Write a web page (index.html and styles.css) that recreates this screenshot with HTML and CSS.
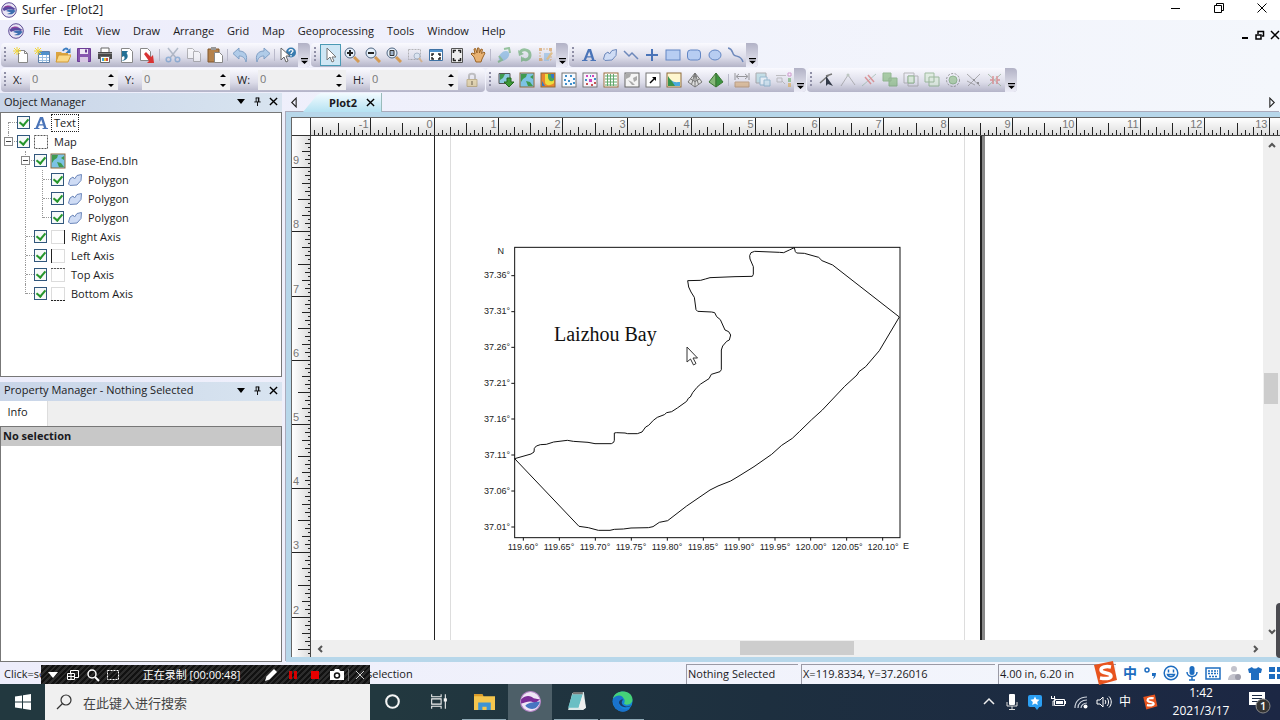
FILE: index.html
```html
<!DOCTYPE html>
<html lang="en">
<head>
  <meta charset="UTF-8">
  <meta name="viewport" content="width=device-width, initial-scale=1.0">
  <title>Surfer - [Plot2]</title>
  <link rel="stylesheet" href="styles.css">
</head>
<body>
  <!-- Shared symbols -->
  <svg class="defs" aria-hidden="true">
    <symbol id="logo" viewBox="0 0 16 16">
      <circle cx="8" cy="8" r="7.3" fill="#e9e4f4" stroke="#5b4a94"/>
      <path d="M1.5 7C4 3 10 3 14.5 7l-2 1C9 6.500 6 8 3 9z" fill="#5a4aa0"/>
      <path d="M5 9c3-2 6-2 9.500-.5C13 12 10 13 6 12l4-1.500z" fill="#3d6fb0"/>
      <path d="M2.500 5.500C5 3 9 3 11 4.500z" fill="#8e3f9c"/>
    </symbol>
    <symbol id="poly" viewBox="0 0 16 16">
      <path d="M1.500 12L3 7l3-2 1.500 2L10 3.500l4.500-1-.5 6-4 4.500-7 .5z" fill="#cfdcf5" stroke="#6d88bb"/>
    </symbol>
    <symbol id="letter-a" viewBox="0 0 16 16">
      <path d="M7 2h3l3.500 11H15v1H9.500v-1H11l-.8-2.500H6L5 13h1.500v1H1v-1h1.500zM6.400 9.300h3.400L8.200 4.500z" fill="#4a74b8" fill-rule="evenodd"/>
    </symbol>
    <symbol id="basemap" viewBox="0 0 16 16">
      <rect x="1" y="1" width="14" height="14" fill="#7cc3e4" stroke="#8d6a3a"/>
      <path d="M2 2h6l-1 3-3 2-2 3zM14 3v4l-3-2zM7 9l4 1 3 4H9z" fill="#3f9a4f"/>
    </symbol>
    <symbol id="frame" viewBox="0 0 16 16">
      <rect x="1.500" y="1.500" width="13" height="13" fill="#fff" stroke="#b9b9b9" stroke-dasharray="1 1"/>
    </symbol>
    <symbol id="pin" viewBox="0 0 10 10">
      <path d="M3 1h4M3.500 1v4.500M6.500 1v4.500M6 1v4.500M1.500 5.500h7M5 5.500V10" fill="none" stroke="#000"/>
    </symbol>
    <symbol id="cross" viewBox="0 0 10 10">
      <path d="M1 1l8 8M9 1L1 9" fill="none" stroke="#000" stroke-width="1.500"/>
    </symbol>
    <symbol id="sogou" viewBox="0 0 26 26">
      <path d="M2 5L21 1l4 19-18 5z" fill="#e8541e"/>
      <path d="M19 7c-5-1-10 0-10 3 0 4 10 2 10 6 0 3-6 3-11 2" fill="none" stroke="#fff" stroke-width="3.500"/>
    </symbol>
  </svg>

  <div class="window">
    <header class="titlebar">
      <svg class="icon"><use href="#logo"/></svg>
      <h1>Surfer - [Plot2]</h1>
      <div class="caption-buttons">
        <button aria-label="Minimize"><svg viewBox="0 0 12 12"><path d="M1 6.500h9" stroke="#000"/></svg></button>
        <button aria-label="Restore"><svg viewBox="0 0 12 12"><path d="M1.500 3.500h7v7h-7zM3.500 3.500v-2h7v7h-2" fill="none" stroke="#000"/></svg></button>
        <button aria-label="Close"><svg viewBox="0 0 12 12"><path d="M1.500 1.500l9 9M10.500 1.500l-9 9" stroke="#000"/></svg></button>
      </div>
    </header>

    <nav class="menubar">
      <svg class="icon"><use href="#logo"/></svg>
      <button>File</button><button>Edit</button><button>View</button><button>Draw</button><button>Arrange</button><button>Grid</button><button>Map</button><button>Geoprocessing</button><button>Tools</button><button>Window</button><button>Help</button>
      <div class="mdi-buttons">
        <button aria-label="Minimize plot"><svg viewBox="0 0 10 10"><path d="M2 8h6" stroke="#000" stroke-width="2"/></svg></button>
        <button aria-label="Restore plot"><svg viewBox="0 0 10 10"><path d="M1 5h5v4H1zM3 4V1.500h5.500V6H7" fill="none" stroke="#000" stroke-width="1.500"/></svg></button>
        <button aria-label="Close plot"><svg viewBox="0 0 10 10"><use href="#cross"/></svg></button>
      </div>
    </nav>

    <!-- Standard, view and draw toolbars -->
    <div class="toolbar-row">
      <div class="toolbar">
        <i class="grip"></i>
        <button class="tool" aria-label="New plot"><svg viewBox="0 0 16 16"><path d="M5.500 3.500h6l3 3v9h-9z" fill="#fff" stroke="#888"/><path d="M11.500 3.500v3h3" fill="none" stroke="#888"/><path d="M4 0v8M0 4h8M1 1l6 6M7 1L1 7" stroke="#f2d63a"/></svg></button>
        <button class="tool" aria-label="New worksheet"><svg viewBox="0 0 16 16"><path d="M4.500 4.500h11v11h-11z" fill="#fff" stroke="#5d7fa8"/><path d="M5 5h10v3H5z" fill="#4f91cc"/><path d="M5 10.500h10M5 13.500h10M8.500 8v7M12.500 8v7" stroke="#9cc0e2"/><path d="M4 0v8M0 4h8M1 1l6 6M7 1L1 7" stroke="#f2d63a"/></svg></button>
        <button class="tool" aria-label="Open"><svg viewBox="0 0 16 16"><path d="M1 5h5l1 1h6v9H1z" fill="#dca43f"/><path d="M3.500 8H16l-3 7H1z" fill="#fad987" stroke="#d39b36"/><path d="M8 4c1-3 4-3 5-1" fill="none" stroke="#3a7cc0" stroke-width="2"/><path d="M15.500 1v5h-5z" fill="#3a7cc0"/></svg></button>
        <button class="tool" aria-label="Save"><svg viewBox="0 0 16 16"><path d="M1.500 1.500h13v13h-13z" fill="#8755ae" stroke="#6c3c96"/><path d="M4 2h8v5H4z" fill="#efe8f5"/><path d="M4 10h8v5H4z" fill="#d7c8e4"/><path d="M9 2.500h2v3H9z" fill="#6c3c96"/></svg></button>
        <button class="tool" aria-label="Print"><svg viewBox="0 0 16 16"><path d="M4 1h8v5H4z" fill="#fff" stroke="#666"/><path d="M1 5h14v7H1z" fill="#4a4a4a"/><path d="M1 6h14v1H1z" fill="#888"/><path d="M3.500 9.500h9v6h-9z" fill="#fff" stroke="#666"/><path d="M5 11h2v3H5z" fill="#3ca4d8"/><path d="M7 11h2v3H7z" fill="#ecc52f"/><path d="M9 11h2v3H9z" fill="#cc4c4c"/></svg></button>
        <button class="tool" aria-label="Import"><svg viewBox="0 0 16 16"><path d="M3.500 1.500h8l3 3v11h-11z" fill="#fff" stroke="#888"/><path d="M3 14c4-1 4-3 3-5L4 10V4h6L8.500 6c3 4 0 8-5.500 8z" fill="#236f94"/></svg></button>
        <button class="tool" aria-label="Export"><svg viewBox="0 0 16 16"><path d="M1.500 1.500h7l3 3v9h-10z" fill="#fff" stroke="#888"/><path d="M5 7l2-2 5 5 2-2 1 8H8l2-2z" fill="#d93434"/></svg></button>
        <i class="sep"></i>
        <button class="tool dim" aria-label="Cut"><svg viewBox="0 0 16 16"><path d="M3 1l8 10M13 1L5 11" stroke="#8593a5" stroke-width="1.500"/><circle cx="3.500" cy="12.500" r="2.300" fill="none" stroke="#5a8fc8" stroke-width="1.500"/><circle cx="12.500" cy="12.500" r="2.300" fill="none" stroke="#5a8fc8" stroke-width="1.500"/></svg></button>
        <button class="tool dim" aria-label="Copy"><svg viewBox="0 0 16 16"><path d="M1.500 1.500h5l2 2v8h-7z" fill="#fff" stroke="#888"/><path d="M7.500 4.500h5l2 2v8h-7z" fill="#fff" stroke="#888"/></svg></button>
        <button class="tool" aria-label="Paste"><svg viewBox="0 0 16 16"><path d="M1 2h11v13H1z" fill="#b5824c" stroke="#80572d"/><path d="M4 0h5v3H4z" fill="#999"/><path d="M7.500 5.500h5l3 3v7h-8z" fill="#fff" stroke="#888"/></svg></button>
        <i class="sep"></i>
        <button class="tool" aria-label="Undo"><svg viewBox="0 0 16 16"><path d="M6 1v3c6 0 9 4 7 11-1-4-3-6-7-6v3L0 6.500z" fill="#b0cbe8" stroke="#7f9fc5"/></svg></button>
        <button class="tool" aria-label="Redo"><svg viewBox="0 0 16 16"><path d="M10 1v3C4 4 1 8 3 15c1-4 3-6 7-6v3l6-5.500z" fill="#b0cbe8" stroke="#7f9fc5"/></svg></button>
        <i class="sep"></i>
        <button class="tool" aria-label="Context help"><svg viewBox="0 0 16 16"><circle cx="11" cy="5.500" r="5" fill="#377bae"/><path d="M9 4.500c0-3 4-2 4-.5 0 1-2 1-2 3M11 8v1.500" fill="none" stroke="#fff" stroke-width="1.200"/><path d="M1 1v12l3-3 2 5 2-1-2-5h4z" fill="#fff" stroke="#666"/></svg></button>
        <button class="more" aria-label="More standard tools"></button>
      </div>
      <div class="toolbar">
        <i class="grip"></i>
        <button class="tool active" aria-label="Select"><svg viewBox="0 0 16 16"><path d="M4 1v12l3-3 2 5 2-1-2-4h4z" fill="#fff" stroke="#777"/></svg></button>
        <button class="tool" aria-label="Zoom in"><svg viewBox="0 0 16 16"><path d="M10 10l5 5" stroke="#d39a54" stroke-width="3"/><circle cx="6" cy="6" r="5" fill="#e6f0fa" stroke="#4f6580"/><path d="M3 6h6M6 3v6" stroke="#222" stroke-width="2"/></svg></button>
        <button class="tool" aria-label="Zoom out"><svg viewBox="0 0 16 16"><path d="M10 10l5 5" stroke="#d39a54" stroke-width="3"/><circle cx="6" cy="6" r="5" fill="#e6f0fa" stroke="#4f6580"/><path d="M3 6h6" stroke="#222" stroke-width="2"/></svg></button>
        <button class="tool" aria-label="Zoom page"><svg viewBox="0 0 16 16"><path d="M10 10l5 5" stroke="#d39a54" stroke-width="3"/><circle cx="6" cy="6" r="5" fill="#e6f0fa" stroke="#4f6580"/><path d="M4 3.500h4v5H4z" fill="#9fb4cc" stroke="#333"/></svg></button>
        <button class="tool dim" aria-label="Zoom rectangle"><svg viewBox="0 0 16 16"><path d="M1.500 2.500h12v10h-12z" fill="none" stroke="#888" stroke-dasharray="2 1"/><circle cx="10" cy="9" r="3" fill="#d5e6f5" stroke="#7c93ac"/><path d="M12 11l3 4" stroke="#d39a54" stroke-width="2"/></svg></button>
        <button class="tool" aria-label="Fit to window"><svg viewBox="0 0 16 16"><path d="M1.500 2.500h13v11h-13z" fill="#fff" stroke="#3f72a4"/><path d="M2 3h12v2H2z" fill="#5294cf"/><path d="M4 9V7h2M10 7h2v2M12 10v2h-2M6 12H4v-2" fill="none" stroke="#222" stroke-width="1.500"/></svg></button>
        <button class="tool" aria-label="Full screen"><svg viewBox="0 0 16 16"><path d="M2.500 1.500h11v14h-11z" fill="#eee" stroke="#555"/><path d="M4.500 6V3.500H7M9 3.500h2.500V6M11.500 11v2.500H9M7 13.500H4.500V11" fill="none" stroke="#222" stroke-width="1.500"/></svg></button>
        <button class="tool" aria-label="Pan"><svg viewBox="0 0 16 16"><path d="M4 10L1 7l1-1 3 1-1-5 1.500-.5L7 6l.5-5H9l.5 5L11 2l1.500.5-1 4L14 5l1 1-3 6-1 3H6z" fill="#e8b273" stroke="#9b6426"/></svg></button>
        <i class="sep"></i>
        <button class="tool dim" aria-label="Track"><svg viewBox="0 0 16 16"><ellipse cx="8" cy="9" rx="6" ry="4" fill="#68a9dc" transform="rotate(-40 8 9)"/><path d="M8 2l5-1 1 5M3 9l3 4-4 2" fill="none" stroke="#4f9f58" stroke-width="2"/></svg></button>
        <button class="tool dim" aria-label="Rotate"><svg viewBox="0 0 16 16"><path d="M3 6c1-5 10-4 10 2 0 5-6 6-8 3" fill="none" stroke="#4f9f58" stroke-width="3"/><path d="M1 3l1 6 5-2zM4 9v6l4-2z" fill="#4f9f58"/></svg></button>
        <button class="tool dim" aria-label="Reshape"><svg viewBox="0 0 16 16"><path d="M2 2h11v11H2z" fill="none" stroke="#d08a35" stroke-dasharray="2 1"/><path d="M1 1h3v3H1zM11 1h3v3h-3zM1 11h3v3H1z" fill="#d08a35"/><path d="M6 6h7l-2 8H6z" fill="#83b6e2"/><path d="M8 12l5-7 2 1-5 7z" fill="#dca43f"/></svg></button>
        <button class="more" aria-label="More view tools"></button>
      </div>
      <div class="toolbar">
        <i class="grip"></i>
        <button class="tool" aria-label="Text"><svg><use href="#letter-a"/></svg></button>
        <button class="tool" aria-label="Polygon"><svg><use href="#poly"/></svg></button>
        <button class="tool" aria-label="Polyline"><svg viewBox="0 0 16 16"><path d="M1 4l5 5 3-3 6 6" fill="none" stroke="#6d88bb" stroke-width="1.500"/></svg></button>
        <button class="tool" aria-label="Symbol"><svg viewBox="0 0 16 16"><path d="M8 2v12M2 8h12" stroke="#4a74b8" stroke-width="2"/></svg></button>
        <button class="tool" aria-label="Rectangle"><svg viewBox="0 0 16 16"><rect x="1" y="3" width="14" height="10" fill="#b7cdf2" stroke="#6286c4"/></svg></button>
        <button class="tool" aria-label="Rounded rectangle"><svg viewBox="0 0 16 16"><rect x="1.500" y="3" width="13" height="10" rx="3" fill="#b7cdf2" stroke="#6286c4"/></svg></button>
        <button class="tool" aria-label="Ellipse"><svg viewBox="0 0 16 16"><ellipse cx="8" cy="8" rx="6" ry="5" fill="#b7cdf2" stroke="#6286c4"/></svg></button>
        <button class="tool" aria-label="Spline"><svg viewBox="0 0 16 16"><path d="M0 1c5 1 4 5 6 7s7 0 9 7" fill="none" stroke="#6d88bb" stroke-width="1.500"/></svg></button>
        <button class="more" aria-label="More draw tools"></button>
      </div>
    </div>

    <!-- Position, map and geometry toolbars -->
    <div class="toolbar-row">
      <div class="toolbar">
        <i class="grip"></i>
        <label class="position"><span>X:</span><input type="number" placeholder="0"></label>
        <label class="position"><span>Y:</span><input type="number" placeholder="0"></label>
        <label class="position"><span>W:</span><input type="number" placeholder="0"></label>
        <label class="position"><span>H:</span><input type="number" placeholder="0"></label>
        <button class="tool dim" aria-label="Lock ratio"><svg viewBox="0 0 16 16"><path d="M5 8V4c0-3 6-3 6 0v4" fill="none" stroke="#999" stroke-width="2"/><path d="M3 7.500h10v7H3z" fill="#e3cb84" stroke="#a58b46"/><path d="M8 9v4" stroke="#7b652c" stroke-width="2"/></svg></button>
      </div>
      <div class="toolbar">
        <i class="grip"></i>
        <button class="tool" aria-label="New map"><svg viewBox="0 0 16 16"><path d="M1 1.500h11v10H1z" fill="#8ccbe0" stroke="#555"/><path d="M2 2h5l-2 4-3 2z" fill="#3f9a4f"/><path d="M9 6h4v4h3l-5 5-5-5h3z" fill="#3c9836" stroke="#24691f"/></svg></button>
        <button class="tool" aria-label="Base map"><svg><use href="#basemap"/></svg></button>
        <button class="tool" aria-label="Contour map"><svg viewBox="0 0 16 16"><rect x="1" y="1" width="14" height="14" fill="#e9862f" stroke="#8d6a3a"/><path d="M5 2h9v9c-3 3-9 3-9-1z" fill="#eddd3c"/><path d="M8 2h6v6c-3 3-6 0-6-3z" fill="#48a554"/><path d="M11 2h3v4c-3 1-3-2-3-4zM2 9l3 5H2z" fill="#3478c6"/></svg></button>
        <button class="tool" aria-label="Post map"><svg viewBox="0 0 16 16"><rect x="1" y="1" width="14" height="14" fill="#f6faff" stroke="#777"/><path d="M4 3h2v2H4zM9 3h2v2H9zM12 6h2v2h-2zM3 7h2v2H3zM7 8h2v2H7zM4 11h2v2H4zM9 11h2v2H9zM12 10h2v2h-2z" fill="#3f8fca"/></svg></button>
        <button class="tool" aria-label="Classed post map"><svg viewBox="0 0 16 16"><rect x="1" y="1" width="14" height="14" fill="#f8f4fb" stroke="#777"/><path d="M4 3h2v2H4zM10 3h2v2h-2zM7 7h3v3H7z" fill="#d246bd"/><path d="M12 6h2v2h-2zM3 7h2v2H3zM8 3h1v2H8z" fill="#3f8fca"/><path d="M4 11h2v2H4zM9 12h2v2H9zM12 10h2v2h-2z" fill="#c65555"/></svg></button>
        <button class="tool" aria-label="Grid values"><svg viewBox="0 0 16 16"><rect x="1" y="1" width="14" height="14" fill="#fff" stroke="#9b7140"/><path d="M2 4h12M2 7h12M2 10h12M2 13h12M4.500 2v12M7.500 2v12M10.500 2v12" stroke="#63a86c"/></svg></button>
        <button class="tool" aria-label="Image map"><svg viewBox="0 0 16 16"><rect x="1" y="1" width="14" height="14" fill="#f4f4f4" stroke="#666"/><path d="M2 2h5l-1 3-4 2zM9 6l4-2v4l-3 2zM4 8l4 2 3 3H8z" fill="#aaa"/></svg></button>
        <button class="tool" aria-label="Vector map"><svg viewBox="0 0 16 16"><rect x="1" y="1" width="14" height="14" fill="#fff" stroke="#777"/><path d="M5 11l5-5" stroke="#000" stroke-width="1.500"/><path d="M7 5h4v4z"/></svg></button>
        <button class="tool" aria-label="Color relief"><svg viewBox="0 0 16 16"><rect x="1" y="1" width="14" height="14" fill="#fff6cf" stroke="#8d6a3a"/><path d="M2 4c5 8 8 7 12 7v3H2z" fill="#39934b"/><path d="M5 8c3 3 6 2 9 2v4H9z" fill="#4aa9dc"/></svg></button>
        <button class="tool" aria-label="3D wireframe"><svg viewBox="0 0 16 16"><path d="M8 1L1 10l7 5 7-5zM8 1v14M8 1L4.500 12.500M8 1l3.500 11.500M6 4l2 1 2-1M3.500 7L8 9.500 12.500 7" fill="#ddd" stroke="#777"/></svg></button>
        <button class="tool" aria-label="3D surface"><svg viewBox="0 0 16 16"><path d="M8 1L1 10l7 5z" fill="#86b878" stroke="#3c7734"/><path d="M8 1l7 9-7 5z" fill="#3c9340" stroke="#3c7734"/></svg></button>
        <i class="sep"></i>
        <button class="tool dim" aria-label="Scale bar"><svg viewBox="0 0 16 16"><path d="M1 1v7M15 1v7M3 4.500h10M5 2L2 4.500 5 7M11 2l3 2.500L11 7" fill="none" stroke="#555"/><path d="M1 10h14v5H1z" fill="#d9a667" stroke="#a2713b"/></svg></button>
        <button class="tool dim" aria-label="Overlay"><svg viewBox="0 0 16 16"><path d="M1 1h10v10H1z" fill="#a4d4dc" stroke="#777"/><path d="M5 5h7v8H5z" fill="#e9f5fb" stroke="#5897b8"/><path d="M9 8h6v6H9z" fill="#bfe1ef" stroke="#5897b8"/></svg></button>
        <button class="tool dim" aria-label="Stack maps"><svg viewBox="0 0 16 16"><path d="M0 3.500h10M1 6h5v4H1zM6 9l3 3" fill="none" stroke="#999"/><path d="M12 1h3v3h-3z" fill="#fff" stroke="#b955b0"/><path d="M12 6h3v4h-3z" fill="#5ba55b"/><path d="M12 11h3v4h-3z" fill="#dca43f"/></svg></button>
        <button class="more" aria-label="More map tools"></button>
      </div>
      <div class="toolbar">
        <i class="grip"></i>
        <button class="tool" aria-label="Reshape"><svg viewBox="0 0 16 16"><path d="M1 11l9-8M7 4l6-2" stroke="#777" stroke-width="1.500"/><path d="M7 4v10l2-2 5 2z" fill="#333a48"/></svg></button>
        <button class="tool dim" aria-label="Add vertex"><svg viewBox="0 0 16 16"><path d="M1 14L8 3l7 10" fill="none" stroke="#888"/><circle cx="8" cy="3" r="1.500" fill="#9a9"/></svg></button>
        <button class="tool dim" aria-label="Break line"><svg viewBox="0 0 16 16"><path d="M1 14L15 2" stroke="#8a9"/><path d="M4 5l6 7M7 3l6 7" stroke="#d25353" stroke-width="1.500"/></svg></button>
        <button class="tool dim" aria-label="Union"><svg viewBox="0 0 16 16"><path d="M1 1h8v8H1zM7 6h8v8H7z" fill="#72b167" stroke="#4e8f47"/></svg></button>
        <button class="tool dim" aria-label="Intersect"><svg viewBox="0 0 16 16"><path d="M1 1h10v10H1zM5 4h10v10H5z" fill="none" stroke="#888"/><path d="M5 4h6v7H5z" fill="#cfe8ca" stroke="#4e8f47"/></svg></button>
        <button class="tool dim" aria-label="Difference"><svg viewBox="0 0 16 16"><path d="M1 1h9v9H1zM5 5h10v9H5z" fill="#d8edd5" stroke="#62955c"/></svg></button>
        <button class="tool dim" aria-label="Buffer"><svg viewBox="0 0 16 16"><circle cx="8" cy="8" r="6.500" fill="none" stroke="#555" stroke-dasharray="2 1.500"/><circle cx="8" cy="8" r="4" fill="#82b878" stroke="#4e8f47"/></svg></button>
        <button class="tool dim" aria-label="Split lines"><svg viewBox="0 0 16 16"><path d="M1 2l13 12M14 2L2 14M1 9l8 4" stroke="#777"/><path d="M7 7h2v2H7zM11 10h2v2h-2z" fill="#555"/></svg></button>
        <button class="tool dim" aria-label="Trim"><svg viewBox="0 0 16 16"><path d="M1 2l13 12M14 2L1 14" stroke="#7a9a78"/><path d="M6 4v8M10 4v8M3 8h3M10 8h3" stroke="#d25353" stroke-width="1.500"/></svg></button>
        <button class="more" aria-label="More geometry tools"></button>
      </div>
    </div>

    <main class="workspace">
      <aside class="dock">
        <section class="panel object-manager">
          <header class="panel-title">
            <h2>Object Manager</h2>
            <button aria-label="Panel menu"><i class="caret"></i></button>
            <button aria-label="Auto hide"><svg><use href="#pin"/></svg></button>
            <button aria-label="Close panel"><svg><use href="#cross"/></svg></button>
          </header>
          <div class="panel-body">
            <ul class="tree">
              <li><label><input type="checkbox" checked><svg><use href="#letter-a"/></svg><span class="focused">Text</span></label></li>
              <li>
                <button class="expander" aria-label="Collapse Map"></button>
                <label><input type="checkbox" checked><svg viewBox="0 0 16 16"><rect x="1.500" y="1.500" width="13" height="13" fill="#fff" stroke="#555" stroke-dasharray="2 1"/></svg><span>Map</span></label>
                <ul>
                  <li>
                    <button class="expander" aria-label="Collapse Base-End.bln"></button>
                    <label><input type="checkbox" checked><svg><use href="#basemap"/></svg><span>Base-End.bln</span></label>
                    <ul>
                      <li><label><input type="checkbox" checked><svg><use href="#poly"/></svg><span>Polygon</span></label></li>
                      <li><label><input type="checkbox" checked><svg><use href="#poly"/></svg><span>Polygon</span></label></li>
                      <li><label><input type="checkbox" checked><svg><use href="#poly"/></svg><span>Polygon</span></label></li>
                    </ul>
                  </li>
                  <li><label><input type="checkbox" checked><svg viewBox="0 0 16 16"><use href="#frame"/><path d="M14.500 1v14" stroke="#222"/></svg><span>Right Axis</span></label></li>
                  <li><label><input type="checkbox" checked><svg viewBox="0 0 16 16"><use href="#frame"/><path d="M1.500 1v14" stroke="#222"/></svg><span>Left Axis</span></label></li>
                  <li><label><input type="checkbox" checked><svg viewBox="0 0 16 16"><use href="#frame"/><path d="M1 1.500h14" stroke="#555" stroke-dasharray="2 1"/></svg><span>Top Axis</span></label></li>
                  <li><label><input type="checkbox" checked><svg viewBox="0 0 16 16"><use href="#frame"/><path d="M1 14.500h14" stroke="#222" stroke-dasharray="2 1"/></svg><span>Bottom Axis</span></label></li>
                </ul>
              </li>
            </ul>
          </div>
        </section>
        <section class="panel property-manager">
          <header class="panel-title">
            <h2>Property Manager - Nothing Selected</h2>
            <button aria-label="Panel menu"><i class="caret"></i></button>
            <button aria-label="Auto hide"><svg><use href="#pin"/></svg></button>
            <button aria-label="Close panel"><svg><use href="#cross"/></svg></button>
          </header>
          <div class="panel-tabs"><button>Info</button></div>
          <div class="panel-body">
            <h3>No selection</h3>
          </div>
        </section>
      </aside>

      <section class="document">
        <div class="doc-tabs">
          <button class="tab-scroll" aria-label="Scroll tabs left"><svg viewBox="0 0 10 10"><path d="M6.500 1v8l-4-4z" fill="none" stroke="#222"/></svg></button>
          <div class="doc-tab"><span>Plot2</span><button aria-label="Close tab"><svg><use href="#cross"/></svg></button></div>
          <button class="tab-scroll right" aria-label="Scroll tabs right"><svg viewBox="0 0 10 10"><path d="M3.500 1v8l4-4z" fill="none" stroke="#222"/></svg></button>
        </div>
        <div class="plot">
          <div class="ruler-corner"></div>
          <svg class="ruler ruler-x" id="ruler-x"></svg>
          <svg class="ruler ruler-y" id="ruler-y"></svg>
          <div class="canvas">
            <svg class="page">
              <path d="M123.500 0v2000" stroke="#222"/>
              <path d="M139.500 0v2000M653.500 0v2000" stroke="#ddd"/>
              <path d="M670 0v2000" stroke="#222" stroke-width="2"/>
              <path d="M672.500 0v2000" stroke="#888" stroke-width="3"/>
              <svg x="159" y="99" width="450" height="325" viewBox="0 0 1350 975">
                <g class="outline">
                  <rect x="134" y="37" width="1156" height="871"/>
                  <path d="M134 671L183 657 192 651 193 640 199 633 211 629 229 628 251 621 292 616 310 619 354 622 375 626 424 626 431 622 433 616 433 594 439 593 465 594 473 596 502 596 516 591 527 576 536 571 550 556 562 547 583 539 590 533 605 530 622 519 650 499 655 490 661 486 668 473 681 457 692 447 717 431 724 418 750 410 754 404 754 345 758 333 770 319 778 315 782 300 776 290 765 285 751 254 740 245 734 233 725 231 683 229 678 224 673 187 663 171 656 156 653 137 692 136 706 132 720 128 795 125 847 124 850 118 850 95 840 72 839 62 843 53 854 49 928 52 941 53 958 45 973 38 976 50 980 54 1003 55 1046 67 1056 77 1088 90 1288 246 1228 347 1187 395 1167 410 1161 420 1124 454 1057 525 1025 554 989 589 967 610 935 631 905 658 852 695 807 723 782 738 744 753 720 765 650 813 593 857 568 862 549 875 535 878 483 879 460 882 433 883 420 886 385 886 355 878 327 874z"/>
                  <path d="M124 122h10M124 230h10M124 337h10M124 445h10M124 552h10M124 660h10M124 768h10M124 876h10"/>
                  <path d="M160 908v9M268 908v9M376 908v9M484 908v9M592 908v9M700 908v9M807 908v9M915 908v9M1022 908v9M1130 908v9M1238 908v9"/>
                </g>
              </svg>
              <g class="axis axis-y">
                <text x="193" y="118">N</text>
                <text x="199" y="142">37.36°</text><text x="199" y="178">37.31°</text><text x="199" y="214">37.26°</text><text x="199" y="250">37.21°</text><text x="199" y="286">37.16°</text><text x="199" y="322">37.11°</text><text x="199" y="358">37.06°</text><text x="199" y="394">37.01°</text>
              </g>
              <g class="axis axis-x">
                <text x="212" y="414">119.60°</text><text x="248" y="414">119.65°</text><text x="284" y="414">119.70°</text><text x="320" y="414">119.75°</text><text x="356" y="414">119.80°</text><text x="392" y="414">119.85°</text><text x="428" y="414">119.90°</text><text x="464" y="414">119.95°</text><text x="500" y="414">120.00°</text><text x="536" y="414">120.05°</text><text x="572" y="414">120.10°</text><text x="595" y="413">E</text>
              </g>
              <text class="map-title" x="243" y="205">Laizhou Bay</text>
              <path d="M376 211v15l3.500-3 3 6 2.500-1.500-3-5.500h4.500z" fill="#fff" stroke="#333"/>
            </svg>
          </div>
          <div class="scrollbar vertical">
            <button aria-label="Scroll up"><svg viewBox="0 0 10 10"><path d="M2 7l3-3 3 3" fill="none" stroke="#555" stroke-width="2"/></svg></button>
            <div class="track"><i class="thumb"></i></div>
            <button aria-label="Scroll down"><svg viewBox="0 0 10 10"><path d="M2 3l3 3 3-3" fill="none" stroke="#555" stroke-width="2"/></svg></button>
          </div>
          <div class="scrollbar horizontal">
            <button aria-label="Scroll left"><svg viewBox="0 0 10 10"><path d="M7 2L4 5l3 3" fill="none" stroke="#555" stroke-width="2"/></svg></button>
            <div class="track"><i class="thumb"></i></div>
            <button aria-label="Scroll right"><svg viewBox="0 0 10 10"><path d="M3 2l3 3-3 3" fill="none" stroke="#555" stroke-width="2"/></svg></button>
          </div>
        </div>
      </section>
    </main>

    <footer class="statusbar">
      <div class="hint"><span>Click=se</span><span>selection</span></div>
      <div class="cell cell-object">Nothing Selected</div>
      <div class="cell cell-coords">X=119.8334, Y=37.26016</div>
      <div class="cell cell-page">4.00 in, 6.20 in</div>

      <!-- Screen recorder strip floating over the status bar -->
      <div class="recorder">
        <button aria-label="Recorder menu"><svg viewBox="0 0 14 14"><path d="M2 4h10l-5 6z" fill="#fff"/></svg></button>
        <button aria-label="Recorder window"><svg viewBox="0 0 14 14"><path d="M1.500 5.500h7v6h-7zM4.500 5V2.500h8v7H9M5 6v5M2 8.500h6" fill="none" stroke="#fff"/></svg></button>
        <button aria-label="Magnify"><svg viewBox="0 0 14 14"><circle cx="6" cy="6" r="4" fill="none" stroke="#fff" stroke-width="1.500"/><path d="M9 9l4 4" stroke="#fff" stroke-width="2"/></svg></button>
        <button aria-label="Select region"><svg viewBox="0 0 14 14"><path d="M1.500 2.500h11v9h-11z" fill="none" stroke="#fff" stroke-dasharray="2 1"/></svg></button>
        <span class="recorder-time">正在录制 [00:00:48]</span>
        <button aria-label="Annotate"><svg viewBox="0 0 14 14"><path d="M1 13l1.500-4.500L10 1l3 3-7.500 7.500z" fill="#fff"/></svg></button>
        <button aria-label="Pause"><svg viewBox="0 0 14 14"><path d="M3 3h3v8H3zM8 3h3v8H8z" fill="#d40000"/></svg></button>
        <button aria-label="Stop"><svg viewBox="0 0 14 14"><path d="M3 3h8v8H3z" fill="#e60000"/></svg></button>
        <button aria-label="Snapshot"><svg viewBox="0 0 14 14"><path d="M0 3h4l1-2h4l1 2h4v9H0z" fill="#fff"/><circle cx="7" cy="7.500" r="2.500" fill="#fff" stroke="#111" stroke-width="1.500"/></svg></button>
        <button class="recorder-close" aria-label="Close recorder"><svg viewBox="0 0 14 14"><path d="M3 3l8 8M11 3l-8 8" stroke="#ccc"/></svg></button>
      </div>

      <!-- Input method strip -->
      <div class="ime">
        <svg class="ime-logo"><use href="#sogou"/></svg>
        <span>中</span>
        <svg viewBox="0 0 16 16"><circle cx="5" cy="5" r="2" fill="none" stroke="#1e6dc0" stroke-width="1.500"/><path d="M10 8h4c0 3-1 5-3 6l1-3h-2z" fill="#1e6dc0"/></svg>
        <svg viewBox="0 0 16 16"><circle cx="8" cy="8" r="6.800" fill="none" stroke="#1e6dc0" stroke-width="1.500"/><path d="M5.500 4.500v3M10.500 4.500v3M4.500 9.500c1 3 6 3 7 0z" fill="none" stroke="#1e6dc0" stroke-width="1.500"/></svg>
        <svg viewBox="0 0 16 16"><rect x="5.500" y="1" width="5" height="9" rx="2.500" fill="#1e6dc0"/><path d="M3 7c0 6 10 6 10 0M8 11.500V15M5 15h6" fill="none" stroke="#1e6dc0" stroke-width="1.500"/></svg>
        <svg viewBox="0 0 16 16"><path d="M1 3h14v11H1z" fill="none" stroke="#1e6dc0" stroke-width="1.500"/><path d="M3 6h10M3 8.500h10M4 11.500h8" stroke="#1e6dc0" stroke-width="1.500" stroke-dasharray="2 1"/></svg>
        <svg viewBox="0 0 16 16"><circle cx="8" cy="4" r="3" fill="#c3c3cc"/><path d="M2 15c0-8 12-8 12 0z" fill="#c3c3cc"/><circle cx="12" cy="12" r="3" fill="#9d9daa"/></svg>
        <svg viewBox="0 0 16 16"><path d="M5 2c1 2 5 2 6 0l4 2-1 4h-2v7H4V8H2L1 4z" fill="#1e6dc0"/></svg>
        <svg viewBox="0 0 16 16"><path d="M1 2h6v5H1zM9 2h6v5H9zM1 9h6v5H1zM9 9h6v5H9z" fill="#1e6dc0"/></svg>
      </div>
    </footer>

    <div class="taskbar">
      <button class="start" aria-label="Start"><svg viewBox="0 0 16 16"><path d="M0 2.500l7-1v6.100H0zM8 1.300L16 0v7.600H8zM0 8.500h7v6.100l-7-1zM8 8.500h8V16l-8-1.200z" fill="#fff"/></svg></button>
      <label class="search">
        <svg viewBox="0 0 16 16"><circle cx="10" cy="6" r="5" fill="none" stroke="#333" stroke-width="1.200"/><path d="M6.500 9.500L1 15" stroke="#333" stroke-width="1.200"/></svg>
        <input type="text" placeholder="在此键入进行搜索" aria-label="Search">
      </label>
      <button class="task" aria-label="Cortana"><svg viewBox="0 0 20 20"><circle cx="10" cy="10" r="6" fill="none" stroke="#f4f4f4" stroke-width="2"/></svg></button>
      <button class="task" aria-label="Task view"><svg viewBox="0 0 20 20"><path d="M3.500 3v2.500h9V3M3.500 17v-2.500h9V17M3.500 7.500h9v5h-9zM16.500 3v14" fill="none" stroke="#f4f4f4"/><path d="M15 7h3v3h-3z" fill="#f4f4f4"/></svg></button>
      <button class="task open" aria-label="File Explorer"><svg viewBox="0 0 20 20"><path d="M0 3h8l1 2h11v13H0z" fill="#f5c64e"/><path d="M0 3h8l1 2H0z" fill="#dc9a26"/><path d="M4 11h12v7h-4v-3H8v3H4z" fill="#3e93d5"/></svg></button>
      <button class="task current" aria-label="Surfer"><svg viewBox="0 0 20 20"><circle cx="10" cy="10" r="9.500" fill="#eee4f5" stroke="#b583c8"/><path d="M1 8c5-5 10-3 12-1l6 1-5 4c-4-4-8-1-13 0z" fill="#7b2c98"/><path d="M5 14c4-4 9-3 14-4-2 8-9 9-14 4z" fill="#4775c1"/></svg></button>
      <button class="task open" aria-label="Notepad"><svg viewBox="0 0 20 20"><path d="M6 2l11-1 2 15-3 2H2z" fill="#d9e8e8"/><path d="M6 3h10l-4 13H2z" fill="#69bfc4"/><path d="M12 16l4-13 3 13-3 2z" fill="#eee"/><path d="M7 1h9v2H6z" fill="#777"/></svg></button>
      <button class="task open" aria-label="Edge"><svg viewBox="0 0 22 22"><circle cx="11" cy="11" r="10.500" fill="#1584d8"/><path d="M1 8C3-2 21-2 21.500 9c0 5-6 7-9 4 3-5-3-8-7-6z" fill="#45d179"/><path d="M1 8c4-5 11-4 11 1-4 0-7 5-2 9 3 2 7 1 9 0-5 7-19 4-18-10z" fill="#1a73cc"/><path d="M12 9c-3 2-2 6 2 7 3 1 6-1 6-1-1 2-9 4-12-1-2-3 1-6 4-5z" fill="#1b3b67"/></svg></button>

      <div class="tray">
        <svg viewBox="0 0 16 16"><path d="M3 10l5-5 5 5" fill="none" stroke="#eee" stroke-width="1.500"/></svg>
        <svg viewBox="0 0 16 16"><rect x="5" y="0" width="6" height="11" rx="1" fill="#fff"/><path d="M3 8v4h10V8M8 12v4M5 15.500h6" fill="none" stroke="#ddd"/></svg>
        <svg viewBox="0 0 16 16"><rect x="1" y="1" width="14" height="12" rx="2" fill="#2b9ff3"/><path d="M7 12h6l-3 4z" fill="#2b9ff3"/><path d="M8 2.500l1.300 2.800 3.200.4L10.200 8l.6 3L8 9.500 5.200 11l.6-3-2.300-2.300 3.200-.4z" fill="#fff"/></svg>
        <svg viewBox="0 0 16 16"><path d="M4.500 5.500h10v6h-10zM15.500 7v3M1.500 2v2M4.500 2v2M1 4.500h4V7H3v5" fill="none" stroke="#fff"/><path d="M6 7h7v3H6z" fill="#fff"/></svg>
        <svg viewBox="0 0 16 16"><path d="M2 14C2 7 7 3 14 3M5 14c0-5 4-8 9-8M8 14c0-3 3-5 6-5" fill="none" stroke="#ccd2dc" stroke-width="1.200"/><circle cx="12.500" cy="12.500" r="2" fill="#fff"/></svg>
        <svg viewBox="0 0 16 16"><path d="M1 6h3l3-3v10l-3-3H1zM9 6c1 1 1 3 0 4M11 4c2 2 2 6 0 8M13 2.500c3 3 3 8 0 11" fill="none" stroke="#fff"/></svg>
        <span>中</span>
        <svg><use href="#sogou"/></svg>
      </div>
      <div class="clock"><time>1:42</time><time>2021/3/17</time></div>
      <button class="notify" aria-label="Notifications"><svg viewBox="0 0 22 24"><path d="M0 2h16v13h-6l-3 4v-4H0z" fill="#fff"/><path d="M3 5.500h10M3 8.500h10M3 11.500h7" stroke="#1c2a44"/><circle cx="14" cy="16" r="7" fill="#333" stroke="#888"/></svg><b>1</b></button>
    </div>
    <div class="side-handle"></div>
  </div>

  <script src="script.js"></script>
</body>
</html>
```

FILE: styles.css
```css
* {
  box-sizing: border-box;
}

body {
  margin: 0;
  font: 11px/16px "Open Sans", "Noto Sans CJK SC", sans-serif;
  color: #1a1a22;
  overflow: hidden;
}

h1, h2, h3, ul {
  margin: 0;
  padding: 0;
  font-size: 11px;
  font-weight: 400;
}

button {
  display: flex;
  align-items: center;
  justify-content: center;
  margin: 0;
  padding: 0;
  border: 0;
  background: none;
  font: inherit;
  color: inherit;
}

svg {
  display: block;
  flex: none;
}

.defs {
  position: absolute;
  width: 0;
  height: 0;
}

.window {
  position: relative;
  display: flex;
  flex-direction: column;
  height: 100vh;
  background: linear-gradient(90deg, #ededfb, #f4f7fc);
}

.icon {
  width: 16px;
  height: 16px;
}

/* Title and menu */
.titlebar {
  display: flex;
  align-items: center;
  height: 20px;
  background: #fff;
}

.titlebar .icon {
  margin: 0 5px 0 1px;
}

.titlebar h1 {
  font-size: 12px;
}

.caption-buttons {
  display: flex;
  margin-left: auto;
}

.caption-buttons button {
  width: 43px;
  padding: 0 0 4px 7px;
}

.caption-buttons svg {
  width: 12px;
  height: 12px;
}

.menubar {
  display: flex;
  align-items: center;
  height: 22px;
  padding-left: 8px;
}

.menubar .icon {
  margin-right: 3px;
}

.menubar > button {
  padding: 0 7px 0 6px;
}

.mdi-buttons {
  display: flex;
  margin-left: auto;
  padding-top: 7px;
  gap: 5px;
}

.mdi-buttons svg {
  width: 10px;
  height: 10px;
}

/* Toolbars */
.toolbar-row {
  display: flex;
  gap: 1px;
  height: 24px;
  margin: 1px 0 0 1px;
}

.toolbar {
  position: relative;
  display: flex;
  align-items: center;
  border-radius: 4px;
  background: linear-gradient(#fafaff, #dcdce9 60%, #b4b4c8);
}

.grip {
  width: 2px;
  height: 16px;
  margin: 0 4px 0 3px;
  background: repeating-linear-gradient(#8f8fa6 0 2px, transparent 2px 4px);
}

.sep {
  width: 1px;
  height: 12px;
  margin: 0 2px;
  background: #b9b9ca;
}

.tool {
  width: 21px;
  height: 22px;
}

.tool svg {
  width: 16px;
  height: 16px;
}

.tool.active {
  background: #cfe7f5;
  border: 1px solid #4b9ab5;
}

.dim svg {
  opacity: 0.55;
}

.more {
  position: relative;
  width: 12px;
  height: 24px;
  border-radius: 0 4px 4px 0;
  background: linear-gradient(#b2b2c6, #dcdce8 70%, #ededf8);
}

.more::after {
  content: "";
  position: absolute;
  right: 2px;
  bottom: 3px;
  width: 7px;
  height: 6px;
  background: #000;
  clip-path: polygon(0 0, 100% 0, 100% 20%, 0 20%, 0 45%, 100% 45%, 50% 100%, 0 45%);
}

.position {
  position: relative;
  display: flex;
  align-items: center;
  padding-left: 3px;
}

.position + .position {
  padding-left: 7px;
}

.position span {
  width: 17px;
}

.position:nth-of-type(3) span {
  width: 21px;
}

.position input {
  width: 88px;
  height: 20px;
  padding: 0 2px 4px;
  border: 0;
  background: #efeff0;
  font: inherit;
}

.position input::placeholder {
  color: #777;
}

.position input::-webkit-inner-spin-button {
  display: none;
}

.position::before,
.position::after {
  content: "";
  position: absolute;
  right: 4px;
  border: 3px solid transparent;
}

.position::before {
  top: 1px;
  border-bottom: 3px solid #000;
}

.position::after {
  bottom: 0;
  border-top: 3px solid #000;
}

.position ~ .tool {
  margin: 0 3px;
}

/* Docked panels */
.workspace {
  display: flex;
  flex: 1;
  min-height: 0;
  gap: 4px;
  padding-top: 1px;
}

.dock {
  display: flex;
  flex-direction: column;
  flex: none;
  gap: 5px;
  width: 282px;
}

.panel {
  display: flex;
  flex-direction: column;
}

.object-manager {
  flex: 284;
}

.property-manager {
  flex: 281;
}

.panel-title {
  display: flex;
  align-items: center;
  height: 19px;
  padding: 0 1px 2px 4px;
  background: linear-gradient(90deg, #c9d5e8, #d8e4f0);
}

.panel-title h2 {
  flex: 1;
}

.panel-title button {
  width: 16px;
  height: 16px;
}

.panel-title svg,
.doc-tab svg {
  width: 9px;
  height: 9px;
}

.caret {
  border: 4px solid transparent;
  border-top: 5px solid #000;
  border-bottom: 0;
}

.panel-body {
  flex: 1;
  border: 1px solid #777;
  background: #fff;
}

.panel-tabs {
  display: flex;
  height: 25px;
  background: #efefef;
}

.panel-tabs button {
  width: 48px;
  padding: 0 12px 2px 0;
  border-right: 1px solid #ddd;
  background: #fff;
}

h3 {
  padding: 1px 2px 2px;
  background: #c8c8c8;
  font-weight: 700;
}

/* Object tree */
.tree,
.tree ul {
  list-style: none;
}

.tree ul {
  padding-left: 17px;
}

.tree li {
  position: relative;
}

.tree label {
  display: flex;
  align-items: center;
  height: 19px;
  padding-left: 16px;
}

.tree svg {
  width: 16px;
  height: 16px;
  margin: 0 3px;
}

.tree span {
  padding: 0 2px;
}

.tree .focused {
  outline: 1px dotted #222;
}

.tree input {
  appearance: none;
  position: relative;
  flex: none;
  width: 13px;
  height: 13px;
  margin: 0;
  border: 1px solid #31577c;
  background: #f6f9f9;
}

.tree input:checked::after {
  content: "";
  position: absolute;
  left: 3px;
  top: 0;
  width: 4px;
  height: 7px;
  border: solid #26962c;
  border-width: 0 2px 2px 0;
  transform: rotate(40deg);
}

.tree li::before {
  content: "";
  position: absolute;
  left: 7px;
  top: 0;
  height: 100%;
  border-left: 1px dotted #999;
}

.tree li:last-child::before {
  height: 10px;
}

.tree > li:first-child::before {
  top: 9px;
  height: 10px;
}

.tree li::after {
  content: "";
  position: absolute;
  left: 8px;
  top: 9px;
  width: 8px;
  border-top: 1px dotted #999;
}

.expander {
  position: absolute;
  left: 3px;
  top: 5px;
  z-index: 1;
  width: 9px;
  height: 9px;
  border: 1px solid #888;
  background: linear-gradient(#444, #444) center / 5px 1px no-repeat #fff;
}

/* Document */
.document {
  display: flex;
  flex: 1;
  flex-direction: column;
  min-width: 0;
}

.doc-tabs {
  display: flex;
  align-items: center;
  height: 19px;
}

.tab-scroll {
  width: 17px;
}

.tab-scroll svg {
  width: 11px;
  height: 11px;
}

.tab-scroll.right {
  margin-left: auto;
}

.doc-tab {
  display: flex;
  align-items: center;
  gap: 9px;
  height: 19px;
  padding: 0 6px 0 26px;
  border-right: 1px solid #9bb;
  background: linear-gradient(#f2fbff, #b5e2f2);
  font-weight: 700;
  clip-path: polygon(0 100%, 14px 10%, 18px 0, 100% 0, 100% 100%);
}

.plot {
  display: grid;
  flex: 1;
  grid-template: 18px minmax(0, 1fr) 17px / 19px minmax(0, 1fr) 17px;
  min-height: 0;
  border: solid #b7d7ea;
  border-width: 5px 0 5px 5px;
  box-shadow: inset 1px 1px #666, -1px -1px #aab;
  padding: 1px 0 0 1px;
}

.ruler-corner {
  border: solid #333;
  border-width: 0 1px 1px 0;
  background: #fff;
}

.ruler {
  width: 100%;
  height: 100%;
}

.ruler path {
  fill: none;
  stroke: #222;
}

.ruler text {
  fill: #777;
  font: 11px "Liberation Sans", sans-serif;
}

.ruler-x {
  grid-column: 2 / 4;
  border-bottom: 1px solid #444;
  background: linear-gradient(#fff, #ddd);
}

.ruler-x text {
  text-anchor: end;
}

.ruler-y {
  grid-row: 2 / 4;
  border-right: 1px solid #444;
  background: linear-gradient(90deg, #fff, #ddd);
}

.canvas {
  overflow: hidden;
  background: #fff;
}

.page {
  width: 100%;
  height: 100%;
}

.outline {
  fill: none;
  stroke: #111;
  stroke-width: 3px;
}

.axis {
  fill: #222;
  font: 9px "Liberation Sans", sans-serif;
}

.axis-y {
  text-anchor: end;
}

.axis-x {
  text-anchor: middle;
}

.map-title {
  fill: #111;
  font: 20px "Liberation Serif", serif;
}

.scrollbar {
  display: flex;
  background: #efefef;
}

.scrollbar svg {
  width: 10px;
  height: 10px;
}

.scrollbar button {
  width: 17px;
  height: 17px;
}

.track {
  display: flex;
  flex: 1;
}

.thumb {
  background: #cdcdcd;
}

.vertical,
.vertical .track {
  flex-direction: column;
}

.vertical .thumb {
  height: 31px;
  margin: 220px 2px 0 1px;
}

.horizontal {
  grid-column: 2 / 4;
  padding-right: 16px;
}

.horizontal .thumb {
  width: 114px;
  margin: 1px 0 2px 412px;
}

/* Status bar */
.statusbar {
  position: relative;
  display: flex;
  gap: 3px;
  height: 22px;
  padding-top: 2px;
  line-height: 20px;
}

.hint {
  display: flex;
  flex: 1;
  padding-left: 4px;
}

.hint span:first-child {
  width: 363px;
}

.cell {
  padding-left: 1px;
  border: solid #9a9aa6;
  border-width: 1px 0 0 1px;
  line-height: 18px;
}

.cell-object {
  width: 112px;
}

.cell-coords {
  width: 194px;
}

.cell-page {
  width: 282px;
}

.recorder {
  position: absolute;
  left: 41px;
  top: 3px;
  display: flex;
  align-items: center;
  width: 329px;
  height: 19px;
  padding-left: 2px;
  background: repeating-linear-gradient(135deg, #111 0 2px, #2c2c2c 2px 4px);
  color: #fff;
}

.recorder button {
  width: 20px;
}

.recorder button:nth-of-type(n + 5) {
  width: 22px;
}

.recorder svg {
  width: 14px;
  height: 14px;
}

.recorder-time {
  flex: 1;
  text-align: center;
}

.recorder .recorder-close {
  border-left: 1px solid #666;
  height: 12px;
}

.ime {
  position: absolute;
  right: 0;
  top: 0;
  display: flex;
  align-items: center;
  gap: 5px;
  width: 188px;
  height: 22px;
  background: linear-gradient(90deg, transparent 24px, #fff 24px);
  color: #1e6dc0;
}

.ime svg {
  width: 16px;
  height: 16px;
}

.ime .ime-logo {
  width: 26px;
  height: 26px;
}

.ime span {
  width: 15px;
  font-size: 14px;
  font-weight: 700;
}

/* Taskbar */
.taskbar {
  display: flex;
  align-items: center;
  height: 36px;
  background: linear-gradient(90deg, #22383f 30%, #1d2f3f 60%, #1c2744);
  color: #fff;
}

.start {
  width: 45px;
}

.start svg {
  width: 16px;
  height: 16px;
}

.search {
  display: flex;
  align-items: center;
  gap: 11px;
  width: 325px;
  height: 36px;
  padding-left: 11px;
  background: #f0f0f0;
}

.search svg {
  width: 16px;
  height: 16px;
}

.search input {
  flex: 1;
  border: 0;
  padding: 0;
  background: none;
  font: 13px "Noto Sans CJK SC", sans-serif;
}

.search input::placeholder {
  color: #444;
}

.task {
  width: 44px;
  height: 36px;
  border-bottom: 1px solid transparent;
  margin-right: 2px;
}

.task svg {
  width: 21px;
  height: 21px;
}

.task.open {
  border-color: #8fa9b5;
}

.task.current {
  background: #4d5f68;
}

.tray {
  display: flex;
  align-items: center;
  gap: 7px;
  margin-left: auto;
}

.tray svg {
  width: 16px;
  height: 16px;
}

.tray span {
  width: 16px;
  font-size: 12px;
}

.clock {
  display: flex;
  flex-direction: column;
  align-items: center;
  width: 86px;
  font-size: 12px;
  line-height: 18px;
}

.notify {
  position: relative;
  width: 36px;
  height: 36px;
  padding-right: 4px;
}

.notify svg {
  width: 22px;
  height: 24px;
}

.notify b {
  position: absolute;
  left: 16px;
  top: 14px;
  font-weight: 600;
}

.side-handle {
  position: absolute;
  right: 0;
  bottom: 62px;
  width: 4px;
  height: 55px;
  border-radius: 4px 0 0 4px;
  background: #4a4a50;
}
```

FILE: script.js
```js
// Draws the inch rulers around the plot, sixteen ticks to the inch
const INCH = 64.2;
const ORIGIN_X = 123;
const ORIGIN_Y = 609;

function tickLength(i, full) {
  if (i % 16 === 0) return full;
  if (i % 8 === 0) return 13;
  if (i % 4 === 0) return 9;
  if (i % 2 === 0) return 6;
  return 3;
}

function drawRulers() {
  const rulerX = document.getElementById('ruler-x');
  const rulerY = document.getElementById('ruler-y');
  const step = INCH / 16;
  let path = '';
  let labels = '';

  const lastX = Math.floor((rulerX.clientWidth - ORIGIN_X) / step);
  for (let i = Math.ceil(-ORIGIN_X / step); i <= lastX; i++) {
    const x = Math.round(ORIGIN_X + i * step) + 0.5;
    path += `M${x} 18v-${tickLength(i, 18)}`;
    if (i % 16 === 0) labels += `<text x="${x - 2}" y="10">${i / 16}</text>`;
  }
  rulerX.innerHTML = `<path d="${path}"/>${labels}`;

  path = '';
  labels = '';
  const lastY = Math.floor(ORIGIN_Y / step);
  for (let i = Math.ceil((ORIGIN_Y - rulerY.clientHeight) / step); i <= lastY; i++) {
    const y = Math.round(ORIGIN_Y - i * step) + 0.5;
    path += `M19 ${y}h-${tickLength(i, 19)}`;
    if (i % 16 === 0) labels += `<text x="1" y="${y - 4}">${i / 16}</text>`;
  }
  rulerY.innerHTML = `<path d="${path}"/>${labels}`;
}

drawRulers();
window.addEventListener('resize', drawRulers);
```
